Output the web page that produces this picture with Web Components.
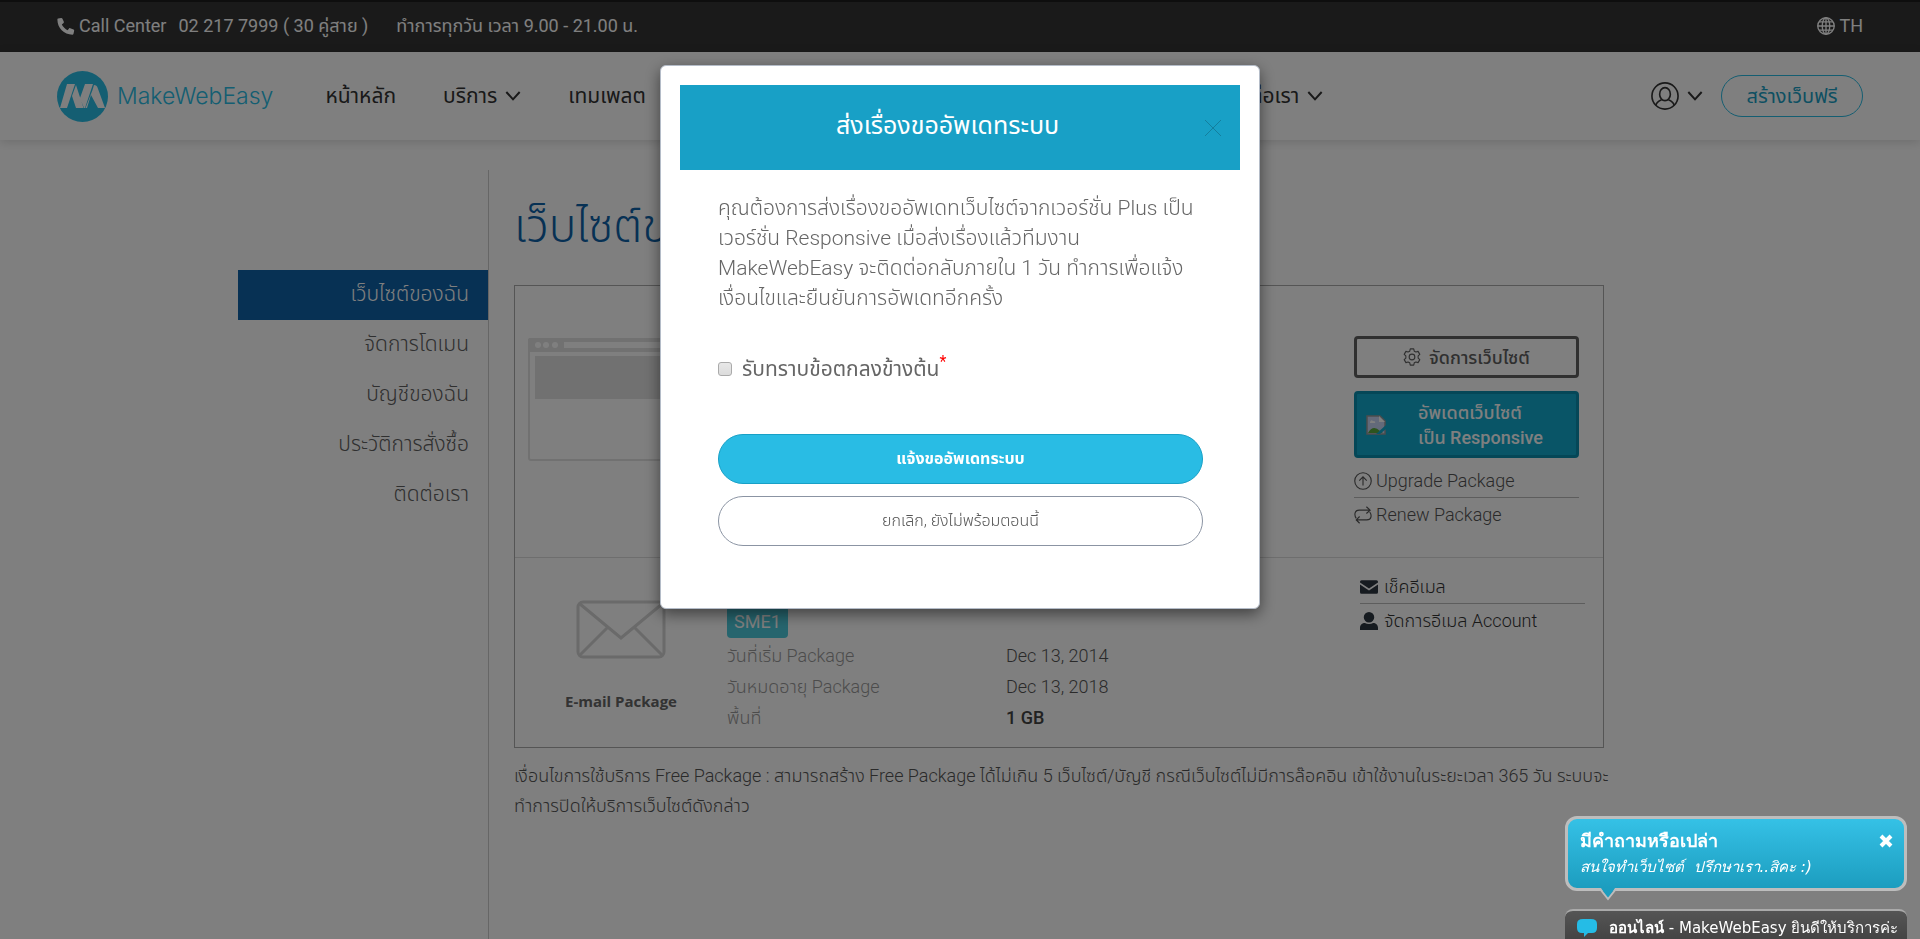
<!DOCTYPE html>
<html lang="th">
<head>
<meta charset="utf-8">
<title>MakeWebEasy</title>
<style>
  html, body { height: 100%; }
  body {
    margin: 0;
    background: #fff;
    color: #606060;
    font-family: Roboto, "Noto Sans Thai", "Noto Sans", "Liberation Sans", sans-serif;
    font-weight: 300;
    font-size: 18px;
    line-height: 30px;
    --blue: #0e62a8;
    --cyan: #29bce4;
  }
</style>
</head>
<body>
<mwe-page>
  <mwe-topbar slot="top"></mwe-topbar>
  <mwe-header slot="header"></mwe-header>
  <mwe-sidebar slot="side"></mwe-sidebar>
  <mwe-websites></mwe-websites>
</mwe-page>
<mwe-modal heading="ส่งเรื่องขออัพเดทระบบ">
  คุณต้องการส่งเรื่องขออัพเดทเว็บไซต์จากเวอร์ชั่น Plus เป็น<br>
  เวอร์ชั่น Responsive เมื่อส่งเรื่องแล้วทีมงาน<br>
  MakeWebEasy จะติดต่อกลับภายใน 1 วัน ทำการเพื่อแจ้ง<br>
  เงื่อนไขและยืนยันการอัพเดทอีกครั้ง
</mwe-modal>
<mwe-chat></mwe-chat>

<script>
(function () {
    function define(name, html) {
        let tmpl = document.createElement("template");
        tmpl.innerHTML = html;
        customElements.define(name, class extends HTMLElement {
            constructor() {
                super();
                this.attachShadow({ mode: "open" }).appendChild(tmpl.content.cloneNode(true));
            }
            connectedCallback() {
                let heading = this.shadowRoot.getElementById("heading");
                if (heading && this.hasAttribute("heading")) {
                    heading.textContent = this.getAttribute("heading");
                }
            }
        });
    }

    // icons drawn on a 24 unit grid
    const ICONS = {
        phone: '<path fill="currentColor" d="M5.500 1.200 1.500 2.100C.9 2.300.5 2.800.5 3.400.5 14.800 9.200 23.500 20.600 23.500c.6 0 1.100-.4 1.300-1l1-4.200c.1-.6-.2-1.200-.8-1.500l-4.500-1.900c-.5-.2-1.100-.1-1.500.3l-2 2.400C11 16 8 13 6.400 9.900l2.400-2c.4-.4.6-1 .3-1.500L7.100 1.900c-.2-.5-.9-.8-1.600-.7z"/>',
        globe: '<g fill="none" stroke="currentColor" stroke-width="1.800"><circle cx="12" cy="12" r="11"/><ellipse cx="12" cy="12" rx="5" ry="11"/><path d="M12 1v22M1 12h22M2.600 6.500h18.800M2.600 17.500h18.800"/></g>',
        chevron: '<path fill="none" stroke="currentColor" stroke-width="3" d="M2 6l10 11L22 6"/>',
        user: '<g fill="none" stroke="currentColor" stroke-width="1.400"><circle cx="12" cy="12" r="11.200"/><ellipse cx="12" cy="10.400" rx="4.600" ry="5.600"/><path d="M4.200 20c.5-2.800 2.600-3.700 4.900-4.700M19.800 20c-.5-2.800-2.600-3.700-4.900-4.700"/></g>',
        gear: '<g fill="none" stroke="currentColor" stroke-width="1.500" stroke-linejoin="round"><circle cx="12" cy="12" r="3.800"/><path d="M9.700 1.200h4.600l.7 3 2.200 1.200 2.900-.9 2.300 4-2.200 2.100v2.800l2.200 2.100-2.300 4-2.900-.9-2.200 1.200-.7 3H9.700l-.7-3-2.200-1.200-2.900.9-2.300-4 2.200-2.100v-2.800L1.600 8.500l2.300-4 2.900.9L9 4.200z"/></g>',
        up: '<g fill="none" stroke="currentColor" stroke-width="1.500"><circle cx="12" cy="12" r="11"/><path d="M12 18V7M7 11.500l5-5 5 5"/></g>',
        renew: '<g fill="none" stroke="currentColor" stroke-width="1.500"><path d="M3 16.500C.2 12.500.2 5.500 7 5.500h14M16.500 1l5 4.500-5 4.500M21 8c2.800 4 2.800 10.500-4 10.500H3M7.500 14 3 18.500 7.500 23"/></g>',
        mail: '<path fill="currentColor" d="M2 3h20a2 2 0 0 1 2 2v1l-12 8L0 6V5a2 2 0 0 1 2-2zM0 8.500l12 8 12-8V19a2 2 0 0 1-2 2H2a2 2 0 0 1-2-2z"/>',
        person: '<path fill="currentColor" d="M12 0a7 7 0 1 1 0 14 7 7 0 0 1 0-14zM0 24v-3c0-4 3-6.500 6.500-6.500 3 2 8 2 11 0C21 14.500 24 17 24 21v3z"/>'
    };

    class MweIcon extends HTMLElement {
        constructor() {
            super();
            this.attachShadow({ mode: "open" });
        }
        connectedCallback() {
            this.shadowRoot.innerHTML = `
              <style>
                :host { display: inline-block; flex: none; width: 18px; height: 18px; }
                svg { display: block; width: 100%; height: 100%; }
              </style>
              <svg viewBox="0 0 24 24" aria-hidden="true">${ICONS[this.getAttribute("name")]}</svg>`;
        }
    }
    customElements.define("mwe-icon", MweIcon);

    define("mwe-page", `
      <style>
        :host { display: flex; flex-direction: column; min-height: 100%; }
        .body { flex: 1; display: flex; margin: 30px 238px 0; }
        main { flex: 1; min-width: 0; }
      </style>
      <slot name="top"></slot>
      <slot name="header"></slot>
      <div class="body">
        <slot name="side"></slot>
        <main><slot></slot></main>
      </div>
    `);

    define("mwe-topbar", `
      <style>
        :host {
          display: flex; align-items: center; gap: 12px;
          height: 47px; padding: 0 57px 3px;
          border-top: 2px solid #1c1c1c;
          background: #343434; color: #fff; font-weight: 400;
        }
        span { display: flex; align-items: center; gap: 4px; }
        .hours { margin-left: 16px; }
        .lang { margin-left: auto; }
        a { color: inherit; text-decoration: none; }
      </style>
      <span><mwe-icon name="phone"></mwe-icon> Call Center</span>
      <a href="tel:022177999">02 217 7999 ( 30 คู่สาย )</a>
      <span class="hours">ทำการทุกวัน เวลา 9.00 - 21.00 น.</span>
      <span class="lang"><mwe-icon name="globe"></mwe-icon><a href="#">TH</a></span>
    `);

    define("mwe-header", `
      <style>
        :host {
          display: flex; align-items: center;
          height: 88px; padding: 0 57px;
          box-shadow: 0 2px 10px rgba(0, 0, 0, .15);
          color: #333; font-weight: 400; font-size: 21px;
        }
        a { display: flex; align-items: center; gap: 8px; color: inherit; text-decoration: none; white-space: nowrap; }
        mwe-icon[name=chevron] { width: 16px; height: 16px; }
        .logo { color: var(--cyan); gap: 9px; font-family: Inter, sans-serif; font-size: 23px; font-weight: 300; }
        .logo svg { width: 51px; height: 51px; }
        nav { display: flex; gap: 47px; flex: 0 1 998px; margin-left: 52px; }
        nav a:last-child { margin-left: auto; }
        .user { display: flex; align-items: center; gap: 8px; margin-left: auto; padding: 0; border: 0; background: none; color: inherit; }
        .user mwe-icon[name=user] { width: 28px; height: 28px; }
        .free {
          box-sizing: border-box; width: 142px; height: 42px; margin-left: 18px;
          justify-content: center;
          border: 1px solid var(--cyan); border-radius: 21px; color: #1b9fc4; font-size: 20px;
        }
      </style>
      <a class="logo" href="#">
        <svg viewBox="0 0 51 51" aria-hidden="true">
          <circle cx="25.500" cy="25.500" r="25.500" fill="#29bce4"/>
          <path fill="#fff" d="M10 13h8L10 37H3zM19 14l7.500 23H19l-4-12zM28 13h8l-8 24h-1l-4-10zM37 14c2 0 3 1 3.500 2.500L48 37h-7l-7-13zM35.500 19 30 37h-1.500z"/>
        </svg>
        MakeWebEasy
      </a>
      <nav>
        <a href="#">หน้าหลัก</a>
        <a href="#">บริการ <mwe-icon name="chevron"></mwe-icon></a>
        <a href="#">เทมเพลต</a>
        <a href="#">ติดต่อเรา <mwe-icon name="chevron"></mwe-icon></a>
      </nav>
      <button class="user" aria-label="บัญชีของฉัน"><mwe-icon name="user"></mwe-icon><mwe-icon name="chevron"></mwe-icon></button>
      <a class="free" href="#">สร้างเว็บฟรี</a>
    `);

    define("mwe-sidebar", `
      <style>
        :host {
          display: block; box-sizing: border-box; flex: none;
          width: 251px; padding-top: 100px;
          border-right: 1px solid #ccc;
          font-size: 21px;
        }
        a { display: block; height: 50px; padding-right: 19px; line-height: 48px; text-align: right; color: inherit; text-decoration: none; }
        a.active { background: var(--blue); color: #fff; }
      </style>
      <a class="active" href="#">เว็บไซต์ของฉัน</a>
      <a href="#">จัดการโดเมน</a>
      <a href="#">บัญชีของฉัน</a>
      <a href="#">ประวัติการสั่งซื้อ</a>
      <a href="#">ติดต่อเรา</a>
    `);

    define("mwe-websites", `
      <style>
        :host { display: block; padding-left: 25px; }
        h1 { height: 115px; margin: 0; line-height: 112px; font-size: 46px; font-weight: 300; color: var(--blue); white-space: nowrap; }
        .card { box-sizing: border-box; max-width: 1090px; border: 1px solid #aaa; }
        .row { display: flex; }
        .site { height: 272px; box-sizing: border-box; padding: 50px 24px 0 13px; border-bottom: 1px solid #ddd; }
        .mail { height: 189px; box-sizing: border-box; padding: 12px 18px 0 0; }
        .shot { width: 188px; height: 126px; }
        .links { width: 225px; margin-left: auto; color: #555; }
        .links a { display: flex; align-items: center; gap: 4px; height: 33px; color: inherit; text-decoration: none; }
        .links a + a { border-top: 1px solid #bbb; }
        .mail .links a { gap: 6px; color: #333; }
        .mail .links mwe-icon { color: #2c3640; }
        button {
          display: flex; align-items: center; justify-content: center; gap: 8px;
          box-sizing: border-box; width: 100%; height: 42px; margin: 0 0 13px;
          border: 3px solid #606060; border-radius: 4px;
          background: none; color: #606060; font-family: inherit; font-size: 18px; font-weight: 500; line-height: 25px;
        }
        button.update { height: 67px; margin-bottom: 6px; padding: 0 9px; justify-content: flex-start; gap: 32px; border-color: #0a8fae; background: #12abcf; color: #fff; text-align: left; }
        .update svg { width: 20px; height: 20px; }
        figure { width: 212px; margin: 30px 0 0; text-align: center; }
        figure svg { display: block; width: 90px; height: 59px; margin: 0 auto; }
        figcaption { margin-top: 27px; font: 700 15px/30px "Open Sans", sans-serif; color: #666; }
        dl { display: grid; grid-template-columns: 279px auto; grid-auto-rows: 31px; align-content: start; margin: 36px 0 0; color: #999; }
        dt, dd { margin: 0; }
        dd { color: #555; }
        dd.size { font-weight: 500; color: #444; }
        .tag { grid-column: 1 / -1; justify-self: start; height: 32px; padding: 0 7px; line-height: 32px; border-radius: 4px; background: #4ccadc; color: #fff; font-weight: 400; }
        .info { grid-template-rows: 35px; }
        p { margin: 13px 0 0; color: #555; }
      </style>
      <h1>เว็บไซต์ของฉัน</h1>
      <div class="card">
        <div class="row site">
          <svg class="shot" viewBox="0 0 188 126" aria-hidden="true">
            <rect x="1" y="3" width="186" height="121" rx="2" fill="none" stroke="#e2e2e2" stroke-width="2"/>
            <path fill="#e2e2e2" d="M0 4q0-2 2-2h184q2 0 2 2v12H0z"/>
            <path fill="#fff" d="M36 6h148v6H36z"/>
            <g fill="#fff"><circle cx="10" cy="9" r="3"/><circle cx="18" cy="9" r="3"/><circle cx="27" cy="9" r="3"/></g>
            <path fill="#e2e2e2" d="M7 20h174v43H7z"/>
          </svg>
          <div class="links">
            <button><mwe-icon name="gear"></mwe-icon>จัดการเว็บไซต์</button>
            <button class="update">
              <svg viewBox="0 0 20 20" aria-hidden="true">
                <path fill="#c6d4f5" stroke="#999" stroke-width="1.500" d="M1 1h13l5 5v13H1z"/>
                <path fill="#fff" d="M13 1v6h6zM4 7q1-3 3-1 3 0 2 2H4z"/>
                <path fill="#58a83c" d="M2 18q5-9 12-2l3 2z"/>
                <path fill="#12abcf" d="M20 10v4l-6 5h-4z"/>
              </svg>
              <span>อัพเดตเว็บไซต์<br>เป็น Responsive</span>
            </button>
            <a href="#"><mwe-icon name="up"></mwe-icon>Upgrade Package</a>
            <a href="#"><mwe-icon name="renew"></mwe-icon>Renew Package</a>
          </div>
        </div>
        <div class="row mail">
          <figure>
            <svg viewBox="0 0 90 59" aria-hidden="true">
              <g fill="none" stroke="#d4d4d4" stroke-width="3">
                <rect x="2" y="2" width="86" height="55" rx="5"/>
                <path d="M4 4l41 34L86 4M4 55l27-27M86 55L59 28"/>
              </g>
            </svg>
            <figcaption>E-mail Package</figcaption>
          </figure>
          <dl class="info">
            <dt class="tag">SME1</dt>
            <dt>วันที่เริ่ม Package</dt><dd>Dec 13, 2014</dd>
            <dt>วันหมดอายุ Package</dt><dd>Dec 13, 2018</dd>
            <dt>พื้นที่</dt><dd class="size">1 GB</dd>
          </dl>
          <div class="links">
            <a href="#"><mwe-icon name="mail"></mwe-icon>เช็คอีเมล</a>
            <a href="#"><mwe-icon name="person"></mwe-icon>จัดการอีเมล Account</a>
          </div>
        </div>
      </div>
      <p>เงื่อนไขการใช้บริการ Free Package : สามารถสร้าง Free Package ได้ไม่เกิน 5 เว็บไซต์/บัญชี กรณีเว็บไซต์ไม่มีการล๊อคอิน เข้าใช้งานในระยะเวลา 365 วัน ระบบจะ<br>ทำการปิดให้บริการเว็บไซต์ดังกล่าว</p>
    `);

    define("mwe-modal", `
      <style>
        :host {
          position: fixed; inset: 0; z-index: 10;
          display: flex; justify-content: center; align-items: flex-start;
          background: rgba(0, 0, 0, .5);
        }
        .dialog {
          box-sizing: border-box; width: 600px; margin-top: 65px; padding: 19px 19px 62px;
          border: 1px solid #b4bcc8; border-radius: 6px;
          background: #fff; color: #666; font-size: 21px;
          box-shadow: 0 5px 15px rgba(0, 0, 0, .5);
        }
        header { display: flex; align-items: center; height: 85px; padding: 0 17px; background: #18a0c6; color: #fff; }
        h2 { flex: 1; margin: 0; padding: 0 5px 4px 0; text-align: center; font-size: 25px; font-weight: 400; }
        .close { width: 20px; height: 20px; padding: 0; border: 0; background: none; color: #137f9e; }
        .close svg { display: block; width: 20px; height: 20px; }
        form { display: flex; flex-direction: column; padding: 23px 37px 0 38px; }
        .text { height: 120px; white-space: nowrap; }
        label { display: flex; align-items: center; gap: 10px; height: 30px; margin: 41px 0 50px; font-weight: 400; }
        input { appearance: none; width: 14px; height: 14px; margin: 0; border: 1px solid #aaa; border-radius: 3px; background: linear-gradient(#e8e8e8, #dcdcdc); }
        i { color: #f00; font-style: normal; font-size: 16px; line-height: 16px; vertical-align: top; }
        .btn { height: 50px; margin: 0 0 12px; border: 1px solid #8b94a3; border-radius: 25px; background: #fff; color: #555; font-family: inherit; font-size: 16px; font-weight: 300; }
        .primary { border-color: #18a0c6; background: var(--cyan); color: #fff; font-weight: 700; }
        .btn:last-child { margin: 0; }
      </style>
      <div class="dialog" role="dialog" aria-labelledby="heading">
        <header>
          <h2 id="heading"></h2>
          <button class="close" aria-label="ปิด"><svg viewBox="0 0 20 20"><path fill="none" stroke="currentColor" d="M2 2l16 16M18 2L2 18"/></svg></button>
        </header>
        <form>
          <div class="text"><slot></slot></div>
          <label for="accept"><input id="accept" type="checkbox"><span>รับทราบข้อตกลงข้างต้น<i>*</i></span></label>
          <button class="btn primary" type="button">แจ้งขออัพเดทระบบ</button>
          <button class="btn" type="button">ยกเลิก, ยังไม่พร้อมตอนนี้</button>
        </form>
      </div>
    `);

    define("mwe-chat", `
      <style>
        :host {
          position: fixed; right: 13px; bottom: 0; z-index: 20;
          display: block; width: 342px;
          color: #fff; font: 700 15px/26px "DejaVu Sans", sans-serif;
        }
        .bubble {
          position: relative; box-sizing: border-box; height: 75px; margin-bottom: 18px; padding: 9px 11px 9px 12px;
          border: 3px solid #bdbdbd; border-radius: 12px;
          background: linear-gradient(#35c1e6, #1c9dbf);
        }
        .title { display: flex; justify-content: space-between; font-size: 18px; }
        .note { font-style: italic; font-weight: 400; }
        .tail { position: absolute; left: 30px; top: 69px; width: 20px; height: 13px; }
        .close { padding: 0; border: 0; background: none; color: #fff; }
        .close svg { display: block; width: 14px; height: 14px; }
        .bar {
          display: flex; align-items: center; gap: 12px; box-sizing: border-box;
          width: 100%; height: 30px; padding: 5px 12px 0;
          border: 0; border-top: 2px solid #aaa; border-radius: 8px 8px 0 0;
          background: linear-gradient(#555, #444); color: #fff; font: inherit; font-weight: 400; white-space: nowrap;
        }
        .bar svg { flex: none; width: 20px; height: 20px; }
      </style>
      <div class="bubble">
        <div class="title">มีคำถามหรือเปล่า
          <button class="close" aria-label="ปิด"><svg viewBox="0 0 14 14"><path fill="none" stroke="currentColor" stroke-width="4" d="M2 2l10 10M12 2L2 12"/></svg></button>
        </div>
        <div class="note">สนใจทำเว็บไซต์&nbsp; ปรึกษาเรา..สิคะ :)</div>
        <svg class="tail" viewBox="0 0 20 13" aria-hidden="true"><path fill="#1c9dbf" d="M3 0h14l-7 11z"/><path fill="none" stroke="#bdbdbd" stroke-width="2" d="M2 1l8 10 8-10"/></svg>
      </div>
      <button class="bar">
        <svg viewBox="0 0 20 20" aria-hidden="true"><path fill="#25bce6" d="M6 1h8q6 0 6 5v4q0 5-5 5h-4l-4 4v-4H5q-5 0-5-5V6q0-5 6-5z"/></svg>
        <span><b>ออนไลน์</b> - MakeWebEasy ยินดีให้บริการค่ะ</span>
      </button>
    `);
})();
</script>
</body>
</html>
